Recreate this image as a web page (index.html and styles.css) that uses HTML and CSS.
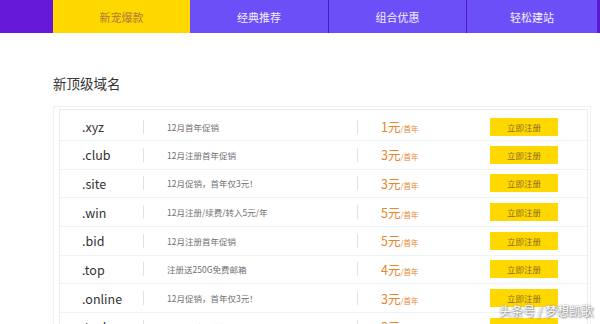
FILE: index.html
```html
<!DOCTYPE html>
<html lang="zh">
<head>
<meta charset="utf-8">
<link rel="stylesheet" href="styles.css">
</head>
<body>
<nav class="nav">
  <div class="edge"></div>
  <div class="tab active">新宠爆款</div>
  <div class="tab">经典推荐</div>
  <div class="tab sep">组合优惠</div>
  <div class="tab sep">轻松建站</div>
  <div class="edge end"></div>
</nav>
<main class="main">
  <h2 class="title">新顶级域名</h2>
  <div class="box">
    <div class="table">
      <div class="row"><div class="dom">.xyz</div><div class="desc">12月首年促销</div><div class="price">1元<small>/首年</small></div><div class="act"><span class="btn">立即注册</span></div></div>
      <div class="row"><div class="dom">.club</div><div class="desc">12月注册首年促销</div><div class="price">3元<small>/首年</small></div><div class="act"><span class="btn">立即注册</span></div></div>
      <div class="row"><div class="dom">.site</div><div class="desc">12月促销，首年仅3元！</div><div class="price">3元<small>/首年</small></div><div class="act"><span class="btn">立即注册</span></div></div>
      <div class="row"><div class="dom">.win</div><div class="desc">12月注册/续费/转入5元/年</div><div class="price">5元<small>/首年</small></div><div class="act"><span class="btn">立即注册</span></div></div>
      <div class="row"><div class="dom">.bid</div><div class="desc">12月注册首年促销</div><div class="price">5元<small>/首年</small></div><div class="act"><span class="btn">立即注册</span></div></div>
      <div class="row"><div class="dom">.top</div><div class="desc">注册送250G免费邮箱</div><div class="price">4元<small>/首年</small></div><div class="act"><span class="btn">立即注册</span></div></div>
      <div class="row"><div class="dom">.online</div><div class="desc">12月促销，首年仅3元！</div><div class="price">3元<small>/首年</small></div><div class="act"><span class="btn">立即注册</span></div></div>
      <div class="row"><div class="dom">.tech</div><div class="desc">12月促销，首年仅3元！</div><div class="price">3元<small>/首年</small></div><div class="act"><span class="btn">立即注册</span></div></div>
    </div>
  </div>
</main>
<div class="mark">头条号 / 梦想凯歌</div>
</body>
</html>
```
FILE: styles.css
```css
* { box-sizing: border-box; }
html, body { margin: 0; padding: 0; }
body {
  width: 600px;
  height: 324px;
  overflow: hidden;
  background: #fff;
  font-family: "Noto Sans CJK SC", "Noto Sans", sans-serif;
  position: relative;
}
.nav {
  display: flex;
  height: 33px;
  background: #6c4ff7;
}
.edge { width: 53px; background: #6419d9; }
.edge.end { width: 3px; background: #5a1ad0; }
.tab {
  display: flex;
  align-items: center;
  justify-content: center;
  width: 138px;
  font-size: 11px;
  color: #f4f0ff;
}
.tab.sep { border-left: 1px solid #4a1cb8; }
.tab:nth-child(5) { width: 131px; }
.tab.active {
  width: 137px;
  background: #ffd800;
  color: #b07a3a;
}
.main { padding: 0 9px 0 53px; }
.title {
  margin: 38px 0 0;
  height: 25px;
  font-size: 13.5px;
  font-weight: normal;
  color: #333;
  line-height: 25px;
}
.box {
  margin-top: 10px;
  border: 1px solid #eef2f2;
  border-bottom: none;
  padding: 2px 2px 0 5px;
}
.table {
  border: 1px solid #e8eeee;
  border-bottom: none;
}
.row {
  display: grid;
  grid-template-columns: 83px 214px 133px 68px 1fr;
  align-items: center;
  height: 28.67px;
  border-bottom: 1px solid #edf2f2;
}
.row:first-child { height: 31px; padding-top: 3px; }
.dom {
  padding-left: 22px;
  font-size: 12.5px;
  color: #333;
}
.desc, .price {
  position: relative;
  padding-left: 24px;
  font-size: 8.5px;
  color: #707070;
}
.desc::before, .price::before {
  content: "";
  position: absolute;
  left: 0;
  top: 50%;
  width: 1px;
  height: 14px;
  margin-top: -7px;
  background: #dfe3e3;
}
.price {
  font-size: 12.5px;
  color: #e8862c;
}
.price small {
  font-size: 7.5px;
  color: #e8862c;
}
.act { display: flex; }
.btn {
  display: flex;
  align-items: center;
  justify-content: center;
  width: 68px;
  height: 18px;
  background: #ffd800;
  font-size: 8.5px;
  color: #8a6a2a;
}
.mark {
  position: absolute;
  right: 7px;
  bottom: 5px;
  font-size: 12px;
  color: #fff;
  text-shadow: 0 0 2px #888, 1px 1px 2px #777;
}
```
